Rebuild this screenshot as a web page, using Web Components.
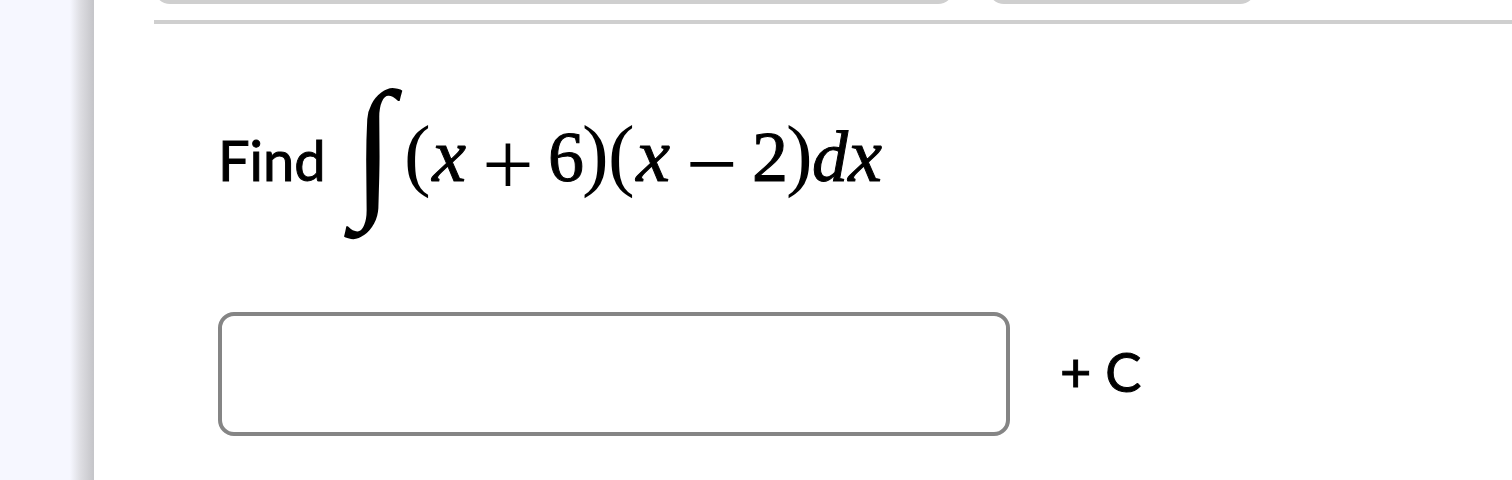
<!DOCTYPE html>
<html lang="en">
<head>
<meta charset="utf-8">
<meta name="viewport" content="width=device-width, initial-scale=1">
<title>Find the integral</title>
<style>
  body { margin: 0; background: #fff; color: #000; font-family: "Trebuchet MS", Lato, sans-serif; }
</style>
</head>
<body>
<question-page>
  <question-toolbar slot="toolbar"></question-toolbar>
  <integral-prompt></integral-prompt>
  <answer-field></answer-field>
</question-page>

<script>
class QuestionPage extends HTMLElement {
  connectedCallback() {
    this.attachShadow({ mode: 'open' });
    this.shadowRoot.innerHTML = `
      <style>
        :host { display: flex; min-height: 100vh; overflow: hidden; }
        aside {
          flex: 0 0 94px;
          background: linear-gradient(to right, transparent 70px, #dedee3 80px, #c6c6ca 93px) #f6f7ff;
        }
        main { flex: 1; min-width: 0; padding-left: 60px; }
        .question { display: flex; flex-direction: column; gap: 56px; padding: 48px 64px 40px; }
      </style>
      <aside></aside>
      <main>
        <slot name="toolbar"></slot>
        <div class="question"><slot></slot></div>
      </main>
    `;
  }
}
customElements.define('question-page', QuestionPage);

class QuestionToolbar extends HTMLElement {
  connectedCallback() {
    this.attachShadow({ mode: 'open' });
    this.shadowRoot.innerHTML = `
      <style>
        :host { display: block; padding-bottom: 16px; border-bottom: 4px solid #cfcfcf; }
        .tabs { display: flex; gap: 34px; height: 4px; align-items: flex-end; overflow: hidden; }
        .tab {
          box-sizing: border-box; flex: 0 0 auto; width: 800px; height: 48px;
          background: #fff; border: 4px solid #cfcfcf; border-radius: 16px;
        }
        .tab.short { width: 268px; }
      </style>
      <div class="tabs">
        <div class="tab"></div>
        <div class="tab short"></div>
      </div>
    `;
  }
}
customElements.define('question-toolbar', QuestionToolbar);

class IntegralPrompt extends HTMLElement {
  connectedCallback() {
    this.attachShadow({ mode: 'open' });
    this.shadowRoot.innerHTML = `
      <style>
        :host { display: flex; align-items: center; height: 184px; font-size: 56px; line-height: 64px; }
        .label { width: 124px; padding-bottom: 8px; -webkit-text-stroke: 1px #000; }
        .math {
          display: flex; align-items: baseline; height: 100px;
          font-family: "Liberation Serif", serif; font-size: 72px; line-height: 80px;
          -webkit-text-stroke: 1px #000;
        }
        .math span { flex: none; text-align: center; }
        .sign {
          width: 62px; padding-bottom: 36px; align-self: center; font-size: 154px; font-style: italic;
          -webkit-text-stroke: 0;
        }
        .paren { width: 26px; font-size: 80px; -webkit-text-stroke: 0; }
        .var { width: 38px; font-size: 76px; font-style: italic; }
        .var.d { width: 34px; font-size: 72px; }
        .op { width: 52px; margin: 0 14px; font-size: 92px; align-self: center; -webkit-text-stroke: 0; }
        .num { width: 34px; }
      </style>
      <span class="label">Find</span>
      <div class="math">
        <span class="sign">∫</span>
        <span class="paren">(</span><span class="var">x</span><span class="op">+</span><span class="num">6</span><span class="paren">)</span>
        <span class="paren">(</span><span class="var">x</span><span class="op">−</span><span class="num">2</span><span class="paren">)</span>
        <span class="var d">d</span><span class="var">x</span>
      </div>
    `;
  }
}
customElements.define('integral-prompt', IntegralPrompt);

class AnswerField extends HTMLElement {
  connectedCallback() {
    this.attachShadow({ mode: 'open' });
    this.shadowRoot.innerHTML = `
      <style>
        :host { display: flex; align-items: center; gap: 50px; font-size: 56px; line-height: 64px; }
        input {
          box-sizing: border-box; width: 792px; max-width: 80%; height: 124px; padding: 0 24px;
          background: #fff; border: 4px solid #858585; border-radius: 16px; font: inherit;
        }
        label { padding-bottom: 4px; font-size: 54px; -webkit-text-stroke: 1px #000; }
      </style>
      <input type="text" id="answer" autocomplete="off">
      <label for="answer">+ C</label>
    `;
  }
}
customElements.define('answer-field', AnswerField);
</script>
</body>
</html>
